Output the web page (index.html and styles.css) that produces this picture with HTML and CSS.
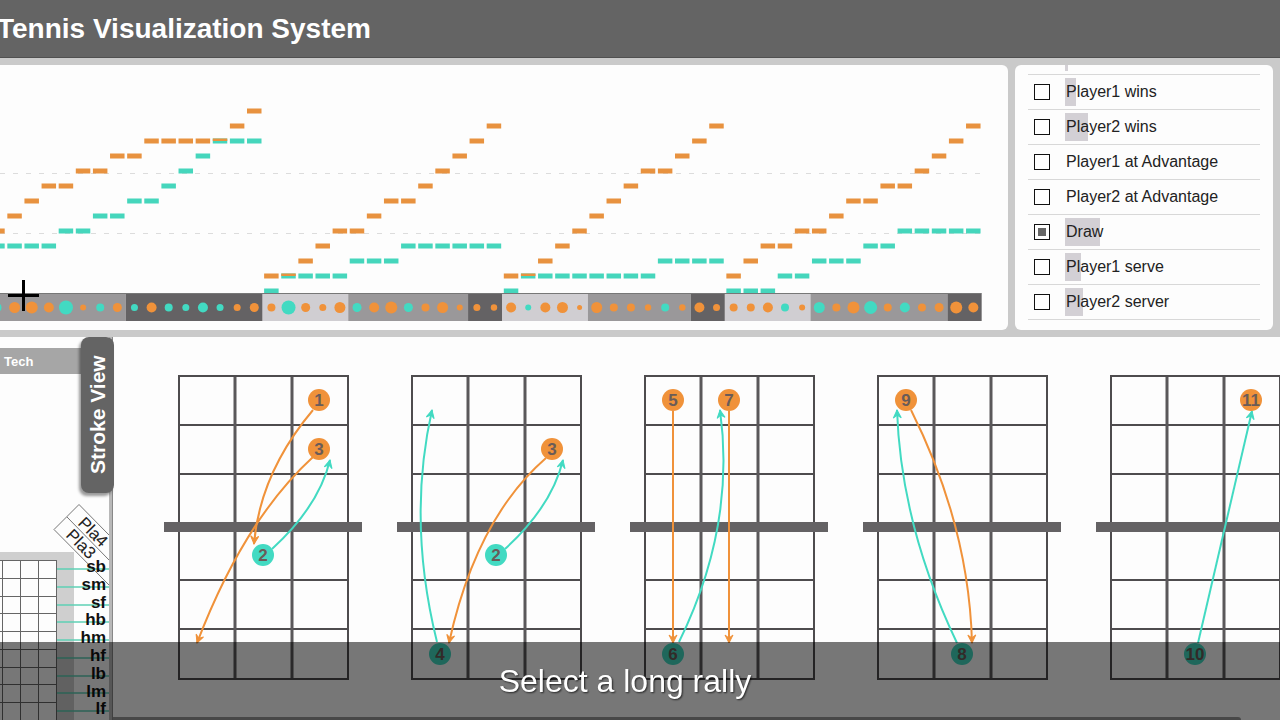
FILE: index.html
```html
<!DOCTYPE html>
<html lang="en">
<head>
  <meta charset="UTF-8">
  <meta name="viewport" content="width=device-width, initial-scale=1.0">
  <title>Tennis Visualization System</title>
  <link rel="stylesheet" href="styles.css">
</head>
<body>

  <header class="header">
    <h1>Tennis Visualization System</h1>
  </header>

  <!-- Top row: score chart and filters -->
  <section class="top-row">
    <div class="panel chart-panel">
      <svg id="scoreChart" viewBox="0 0 1008 265" preserveAspectRatio="xMinYMin meet"></svg>
    </div>
    <form class="panel filter-panel">
      <ul class="filters" id="filters">
        <li class="cut"><span class="bar" style="width: 3px"></span></li>
      </ul>
    </form>
  </section>

  <!-- Bottom row: stroke matrix and courts -->
  <section class="bottom-row">
    <aside class="sidebar">
      <div class="tech-bar">Tech</div>
      <button class="view-tab" type="button">Stroke View</button>
      <svg id="matrix" width="109" height="220"></svg>
    </aside>
    <div class="court-view">
      <div class="courts" id="courts"></div>
      <div class="court-edge"></div>
    </div>
  </section>

  <div class="caption">Select a long rally</div>

  <script src="script.js"></script>
</body>
</html>
```
FILE: styles.css
```css
* {
  box-sizing: border-box;
}

body {
  margin: 0;
  min-height: 100vh;
  display: flex;
  flex-direction: column;
  font-family: "Liberation Sans", Arial, sans-serif;
  background: #cacaca;
  overflow: hidden;
}

svg {
  display: block;
}

.header {
  height: 58px;
  display: flex;
  align-items: center;
  background: #646464;
  border-bottom: 1px solid #505050;
}

.header h1 {
  margin: 0 0 0 -3px;
  font-size: 28px;
  line-height: 32px;
  color: #fff;
  white-space: nowrap;
}

.top-row {
  display: flex;
  gap: 7px;
  padding: 7px 7px 7px 0;
}

.panel {
  height: 265px;
  background: #fdfdfd;
  border-radius: 6px;
  overflow: hidden;
}

.chart-panel {
  flex: 1;
  min-width: 0;
  border-radius: 0 6px 6px 0;
}

.chart-panel svg {
  width: 100%;
  height: 100%;
}

/* Filters */
.filter-panel {
  width: 258px;
  padding: 0 13px;
}

.filters {
  list-style: none;
  margin: 0;
  padding: 0;
}

.filters li {
  height: 35px;
  display: flex;
  align-items: center;
  gap: 16px;
  padding-left: 6px;
  border-bottom: 1px solid #d8d8d8;
}

.filters .cut {
  height: 10px;
  padding-left: 37px;
  align-items: flex-start;
}

.filters .cut .bar {
  height: 6px;
}

.filters input {
  appearance: none;
  width: 16px;
  height: 16px;
  margin: 0;
  border: 1px solid #111;
  background: #fff;
}

.filters input:checked {
  background: #666;
  box-shadow: inset 0 0 0 3px #fff;
}

.filters label {
  position: relative;
  z-index: 0;
  font-size: 16px;
  line-height: 28px;
  color: #222;
}

.bar {
  height: 28px;
  background: #d3d0d5;
}

/* the bar sits behind its label */
.filters label .bar {
  position: absolute;
  left: -1px;
  top: 0;
  z-index: -1;
}

/* Stroke matrix */
.bottom-row {
  flex: 1;
  display: flex;
  background: #fdfdfd;
}

.sidebar {
  position: relative;
  width: 113px;
  padding-top: 11px;
  border-right: 1px solid #888;
  box-shadow: inset -3px 0 #b8b8b8;
}

.tech-bar {
  width: 90px;
  height: 26px;
  margin-bottom: 126px;
  padding-left: 4px;
  font-size: 13px;
  font-weight: bold;
  line-height: 28px;
  color: #fff;
  background: #a6a6a6;
}

/* rotated by 180deg, so the shadow offsets are reversed */
.view-tab {
  position: absolute;
  top: 0;
  right: -2px;
  width: 33px;
  height: 156px;
  padding: 0;
  border: none;
  border-radius: 8px;
  background: #646464;
  box-shadow: 2px -3px 3px rgba(0, 0, 0, 0.4);
  color: #fff;
  font-family: inherit;
  font-size: 21px;
  font-weight: bold;
  writing-mode: vertical-rl;
  transform: rotate(180deg);
}

.stroke-label {
  font-size: 17px;
  font-weight: bold;
  text-anchor: end;
  fill: #111;
}

.player-label {
  font-size: 17px;
  fill: #222;
}

/* Courts */
.court-view {
  flex: 1;
  min-width: 0;
  display: flex;
  flex-direction: column;
  justify-content: space-between;
  overflow: hidden;
}

.courts {
  display: flex;
  gap: 35px;
  padding: 38px 0 0 51px;
}

.courts svg {
  flex: none;
}

.court-edge {
  height: 3px;
  margin-right: 39px;
  border-radius: 0 3px 0 0;
  background: #999;
}

.ball-number {
  font-size: 17px;
  font-weight: bold;
  text-anchor: middle;
  fill: #6a5c58;
}

.caption {
  position: fixed;
  left: 0;
  right: 0;
  bottom: 0;
  height: 78px;
  padding-right: 30px;
  background: rgba(0, 0, 0, 0.53);
  color: #fff;
  font-size: 32px;
  line-height: 78px;
  text-align: center;
  text-shadow: 1px 1px 2px rgba(0, 0, 0, 0.7);
}
```
FILE: script.js
```js
const ORANGE = '#e8923f';
const TEAL = '#45d6bc';
const DOT = { o: '#f0923a', t: '#42dac2' };

// ---- Filters ----
const filters = [
  ['Player1 wins', 11],
  ['Player2 wins', 23],
  ['Player1 at Advantage', 0],
  ['Player2 at Advantage', 0],
  ['Draw', 35, true],
  ['Player1 serve', 16],
  ['Player2 server', 18]
];

document.getElementById('filters').innerHTML += filters.map(([name, width, on], i) => `
  <li>
    <input type="checkbox" id="f${i}" ${on ? 'checked' : ''}>
    <label for="f${i}"><span class="bar" style="width: ${width}px"></span>${name}</label>
  </li>`).join('');

// ---- Score chart ----
const STEP = 17.12;
const START = -9.8;

// points won so far, one value per rally
const score1 = [
  4, 5, 6, 7, 7, 8, 8, 9, 9, 10, 10, 10, 10, 10, 11, 12,
  1, 1, 2, 3, 4, 4, 5, 6, 6, 7, 8, 9, 10, 11,
  1, 1, 2, 3, 4, 5, 6, 7, 8, 8, 9, 10, 11,
  1, 2, 3, 3, 4, 4, 5, 6, 6, 7, 7, 8, 9, 10, 11
];
const score2 = [
  3, 3, 3, 3, 4, 4, 5, 5, 6, 6, 7, 8, 9, 10, 10, 10,
  0, 1, 1, 1, 1, 2, 2, 2, 3, 3, 3, 3, 3, 3,
  0, 1, 1, 1, 1, 1, 1, 1, 1, 2, 2, 2, 2,
  0, 0, 0, 1, 1, 2, 2, 2, 3, 3, 4, 4, 4, 4, 4
];
// rally length dots: winner + radius
const rallies = ('t4 o5.5 o6 o5 t7 o3 t4 o4.5 t3.5 o5 t4 t3.5 t5 t3.5 o3.5 o4.5 ' +
  'o4 t7 o4.5 o3.5 o5.5 t4.5 o5 o6 t4.5 o4 o5.5 o3 o3.5 o3.2 ' +
  'o5 t3 o5 o5.5 o2.5 o5.5 o4 o4 o3.2 t4 o3.2 o5 o3.5 ' +
  'o4 o4 o5 t4 o3 t5.5 o4 o6 t6.5 o4 t5 o4 o4.5 o6 o5').split(' ');
// set sections: end column, colour
const sections = [
  [8, '#9a989a'], [16, '#646264'],
  [21, '#d0ced2'], [28, '#9a989a'], [30, '#646264'],
  [35, '#d0ced2'], [41, '#9a989a'], [43, '#646264'],
  [48, '#d0ced2'], [56, '#9a989a'], [58, '#646264']
];

let chart = '';
[108, 168].forEach(y => {
  chart += `<line x1="0" x2="982" y1="${y}.5" y2="${y}.5" stroke="#dcdcdc" stroke-dasharray="5 8"/>`;
});
score1.forEach((s, i) => {
  const x = START + STEP * i;
  const y1 = 223.5 - 15 * s;
  const y2 = 223.5 - 15 * score2[i];
  chart += `<rect x="${x}" y="${y2}" width="14.5" height="5" fill="${TEAL}"/>`;
  chart += `<rect x="${x}" y="${y1}" width="14.5" height="${y1 === y2 ? 2.5 : 5}" fill="${ORANGE}"/>`;
});
let from = 0;
sections.forEach(([to, fill]) => {
  const x = START - 1.5 + STEP * from;
  chart += `<rect x="${x}" y="228" width="${STEP * (to - from)}" height="28" fill="${fill}"/>`;
  from = to;
});
chart += '<rect x="0" y="228" width="981" height="1" fill="#777"/>';
rallies.forEach((r, i) => {
  chart += `<circle cx="${START + 7.3 + STEP * i}" cy="242.5" r="${r.slice(1)}" fill="${DOT[r[0]]}"/>`;
});
// crosshair
chart += '<path d="M8 230.5H39M23.5 215V246" stroke="#000" stroke-width="3"/>';
document.getElementById('scoreChart').innerHTML = chart;

// ---- Stroke matrix ----
const strokes = ['sb', 'sm', 'sf', 'hb', 'hm', 'hf', 'lb', 'lm', 'lf'];
let matrix = '<rect x="0" y="52" width="74" height="168" fill="#cfcfcf"/>';
matrix += '<rect x="0" y="60" width="56" height="160" fill="#fdfdfd"/>';
matrix += '<path d="M2.5 60V220M20.5 60V220M38.5 60V220M56.5 60V220" stroke="#666"/>';
strokes.forEach((s, i) => {
  const y = 60.5 + Math.round(17.75 * i);
  matrix += `<path d="M0 ${y}H57" stroke="#666"/>`;
  matrix += `<path d="M57 ${y + 8.5}H109" stroke="#5ed0b4" stroke-width="1.5"/>`;
});
matrix += '<path d="M109 35L79 4.5L54 29.5L109 85M67 17L109 60" fill="none" stroke="#777"/>';
matrix += '<text class="player-label" transform="translate(77 24) rotate(45)">Pla4</text>';
matrix += '<text class="player-label" transform="translate(65 36) rotate(45)">Pla3</text>';
strokes.forEach((s, i) => {
  matrix += `<text class="stroke-label" x="106" y="${72 + Math.round(17.8 * i)}">${s}</text>`;
});
document.getElementById('matrix').innerHTML = matrix;

// ---- Courts ----
// balls: number, x, y, colour / shots: path, colour
const courts = [
  {
    balls: [[1, 155, 25, 'o'], [3, 155, 74, 'o'], [2, 99, 180, 't']],
    shots: [['M149 35Q96 98 90 169', 'o'], ['M149 82Q80 145 33 268', 'o'], ['M108 174Q155 131 166 85', 't']]
  },
  {
    balls: [[3, 155, 74, 'o'], [2, 99, 180, 't'], [4, 43, 279, 't']],
    shots: [['M149 83Q79 144 52 268', 'o'], ['M108 174Q155 131 166 85', 't'], ['M40 267Q10 146 35 35', 't']]
  },
  {
    balls: [[5, 43, 25, 'o'], [7, 99, 25, 'o'], [6, 43, 279, 't']],
    shots: [['M43 36V268', 'o'], ['M99 36V268', 'o'], ['M49 267Q106 151 90 35', 't']]
  },
  {
    balls: [[9, 43, 25, 'o'], [8, 99, 279, 't']],
    shots: [['M48 35Q106 151 109 268', 'o'], ['M94 268Q38 151 34 35', 't']]
  },
  {
    balls: [[11, 155, 25, 'o'], [10, 99, 279, 't']],
    shots: [['M102 268L156 36', 't']]
  }
];

document.getElementById('courts').innerHTML = courts.map(({ balls, shots }, n) => {
  let svg = '<svg width="198" height="305">';
  ['o', 't'].forEach(c => {
    svg += `<marker id="tip${n}${c}" viewBox="0 0 10 10" refX="9" refY="5" markerWidth="10" markerHeight="10"
      markerUnits="userSpaceOnUse" orient="auto"><path d="M1 1L9 5L1 9L4 5Z" fill="${DOT[c]}" stroke="${DOT[c]}"/></marker>`;
  });
  svg += '<path d="M15 50H184M15 99H184M15 205H184M15 254H184" stroke="#4e4c4e" stroke-width="2"/>';
  svg += '<path d="M71 1V303M128 1V303" stroke="#5a585a" stroke-width="3"/>';
  svg += '<rect x="15" y="1" width="169" height="303" fill="none" stroke="#4e4c4e" stroke-width="2"/>';
  svg += '<rect x="0" y="147" width="198" height="10" fill="#646264"/>';
  shots.forEach(([d, c]) => {
    svg += `<path d="${d}" fill="none" stroke="${DOT[c]}" stroke-width="2" marker-end="url(#tip${n}${c})"/>`;
  });
  balls.forEach(([num, x, y, c]) => {
    svg += `<circle cx="${x}" cy="${y}" r="11" fill="${DOT[c]}"/>`;
    svg += `<text class="ball-number" x="${x}" y="${y + 6}">${num}</text>`;
  });
  return svg + '</svg>';
}).join('');
```
